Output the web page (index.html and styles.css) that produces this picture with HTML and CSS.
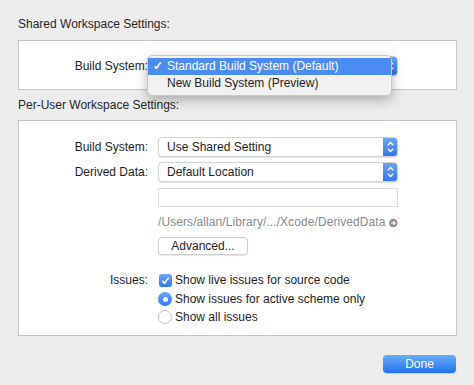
FILE: index.html
```html
<!DOCTYPE html>
<html lang="en">
<head>
    <meta charset="UTF-8">
    <title>Workspace Settings</title>
    <link rel="stylesheet" href="styles.css">
</head>
<body>
    <div class="sheet">
        <h2 class="section-title">Shared Workspace Settings:</h2>
        <div class="group shared">
            <div class="form-grid">
                <label class="field-label">Build System:</label>
                <div class="popup-wrap">
                    <div class="popup">
                        <span class="popup-text">Standard Build System (Default)</span>
                        <span class="stepper">
                            <svg width="15" height="20" viewBox="0 0 15 20"><path d="M4.8 8.2 L7.5 5.5 L10.2 8.2 M4.8 11.8 L7.5 14.5 L10.2 11.8" fill="none" stroke="#fff" stroke-width="1.4"/></svg>
                        </span>
                    </div>
                    <div class="menu">
                        <div class="menu-item selected"><span class="check">&#10003;</span>Standard Build System (Default)</div>
                        <div class="menu-item">New Build System (Preview)</div>
                    </div>
                </div>
            </div>
        </div>

        <h2 class="section-title second">Per-User Workspace Settings:</h2>
        <div class="group per-user">
            <div class="form-grid">
                <label class="field-label">Build System:</label>
                <div class="popup">
                    <span class="popup-text">Use Shared Setting</span>
                    <span class="stepper">
                        <svg width="15" height="20" viewBox="0 0 15 20"><path d="M4.8 8.2 L7.5 5.5 L10.2 8.2 M4.8 11.8 L7.5 14.5 L10.2 11.8" fill="none" stroke="#fff" stroke-width="1.4"/></svg>
                    </span>
                </div>

                <label class="field-label">Derived Data:</label>
                <div class="popup">
                    <span class="popup-text">Default Location</span>
                    <span class="stepper">
                        <svg width="15" height="20" viewBox="0 0 15 20"><path d="M4.8 8.2 L7.5 5.5 L10.2 8.2 M4.8 11.8 L7.5 14.5 L10.2 11.8" fill="none" stroke="#fff" stroke-width="1.4"/></svg>
                    </span>
                </div>

                <span></span>
                <div class="text-field"></div>

                <span></span>
                <div class="path">
                    <span class="path-text">/Users/allan/Library/.../Xcode/DerivedData</span>
                    <svg class="reveal" width="10" height="10" viewBox="0 0 10 10"><circle cx="5" cy="5" r="5" fill="#8f8f8f"/><path d="M2.3 5 H7.2 M5 2.8 L7.2 5 L5 7.2" fill="none" stroke="#fff" stroke-width="1.4"/></svg>
                </div>

                <span></span>
                <div><button class="push-button">Advanced...</button></div>

                <label class="field-label issues-label">Issues:</label>
                <div class="options">
                    <div class="option first">
                        <span class="checkbox">
                            <svg width="13" height="13" viewBox="0 0 13 13"><path d="M3.2 6.8 L5.5 9.2 L9.8 3.6" fill="none" stroke="#fff" stroke-width="1.6"/></svg>
                        </span>
                        Show live issues for source code
                    </div>
                    <div class="option"><span class="radio on"></span>Show issues for active scheme only</div>
                    <div class="option"><span class="radio"></span>Show all issues</div>
                </div>
            </div>
        </div>

        <div class="footer">
            <button class="done-button">Done</button>
        </div>
    </div>
</body>
</html>
```

FILE: styles.css
```css
body {
    margin: 0;
    background: #ececec;
    font-family: "Liberation Sans", Arial, sans-serif;
    font-size: 12px;
    color: #1e1e1e;
}

.sheet {
    width: 474px;
    height: 385px;
    padding: 17px 0 0 18px;
    box-sizing: border-box;
}

.section-title {
    margin: 0 0 8px;
    font-size: 12px;
    font-weight: normal;
    line-height: 15px;
    color: #262626;
}

.section-title.second {
    margin-top: 8px;
    margin-bottom: 7px;
}

.group {
    width: 439px;
    box-sizing: border-box;
    background: #fff;
    border: 1px solid #c6c6c6;
}

.group.shared {
    height: 50px;
    padding-top: 15px;
}

.group.per-user {
    height: 216px;
    padding-top: 16px;
}

.form-grid {
    display: grid;
    grid-template-columns: 129px 240px;
    column-gap: 10px;
    align-items: center;
}

.field-label {
    text-align: right;
    line-height: 15px;
}

.popup-wrap {
    position: relative;
}

.popup {
    height: 20px;
    box-sizing: border-box;
    display: flex;
    align-items: center;
    background: #fff;
    border: 1px solid #d4d4d4;
    border-radius: 4px;
    box-shadow: 0 1px 1px rgba(0, 0, 0, 0.12);
    overflow: hidden;
}

.per-user .form-grid > :nth-child(3),
.per-user .form-grid > :nth-child(4) {
    margin-top: 5px;
}

.popup-text {
    flex: 1;
    padding-left: 8px;
    line-height: 15px;
}

.stepper {
    width: 15px;
    height: 20px;
    margin-right: -1px;
    display: flex;
    background: linear-gradient(#6aa9f8, #2f74ea);
}

.menu {
    position: absolute;
    left: -11px;
    top: -1px;
    width: 245px;
    padding: 2px 0 3px;
    box-sizing: border-box;
    background: #f1f1f1;
    border: 1px solid #c9c9c9;
    border-radius: 5px;
    box-shadow: 0 4px 12px rgba(0, 0, 0, 0.28);
    z-index: 2;
}

.menu-item {
    position: relative;
    height: 17px;
    line-height: 17px;
    padding-left: 19px;
    color: #1e1e1e;
}

.menu-item.selected {
    background: #4a8cf2;
    color: #fff;
}

.check {
    position: absolute;
    left: 5px;
    top: 0;
    font-size: 12px;
    font-weight: bold;
}

.text-field {
    height: 19px;
    margin-top: 6px;
    box-sizing: border-box;
    border: 1px solid #dcdcdc;
    background: #fff;
}

.path {
    margin-top: 8px;
    line-height: 15px;
    color: #8a8a8a;
    display: flex;
    align-items: center;
    gap: 4px;
    white-space: nowrap;
}

.path-text {
    letter-spacing: 0.08px;
}

.push-button {
    margin-top: 7px;
    width: 90px;
    height: 18px;
    padding: 0;
    font-family: inherit;
    font-size: 12px;
    color: #1e1e1e;
    background: #fff;
    border: 1px solid #cfcfcf;
    border-radius: 4px;
    box-shadow: 0 1px 1px rgba(0, 0, 0, 0.1);
}

.issues-label {
    align-self: start;
    margin-top: 18px;
}

.options {
    margin-top: 16px;
}

.option {
    height: 18px;
    display: flex;
    align-items: center;
    gap: 3px;
    line-height: 15px;
}

.option.first {
    margin-bottom: 1px;
}

.checkbox {
    width: 13px;
    height: 13px;
    margin-left: 1px;
    border-radius: 3px;
    background: linear-gradient(#69a8f8, #3479ec);
    display: flex;
}

.radio {
    width: 14px;
    height: 14px;
    box-sizing: border-box;
    border-radius: 50%;
    border: 1px solid #c4c4c4;
    background: #fff;
    display: flex;
    align-items: center;
    justify-content: center;
}

.radio.on {
    border: none;
    background: linear-gradient(#69a8f8, #3479ec);
}

.radio.on::after {
    content: "";
    width: 5px;
    height: 5px;
    border-radius: 50%;
    background: #fff;
}

.footer {
    width: 438px;
    margin-top: 19px;
    display: flex;
    justify-content: flex-end;
}

.done-button {
    width: 73px;
    height: 18px;
    padding: 0;
    font-family: inherit;
    font-size: 12px;
    color: #fff;
    border: none;
    border-radius: 4px;
    background: linear-gradient(#6cabf9, #1f73ec);
    box-shadow: 0 1px 1px rgba(0, 0, 0, 0.15);
}
```
